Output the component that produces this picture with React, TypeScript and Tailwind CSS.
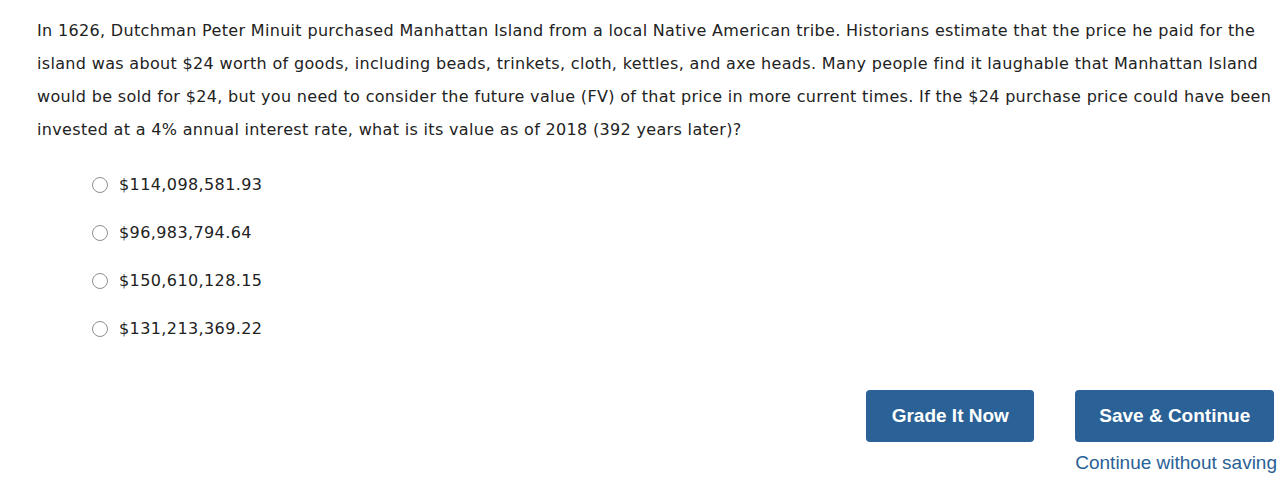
import React from "react";

const options = [
  "$114,098,581.93",
  "$96,983,794.64",
  "$150,610,128.15",
  "$131,213,369.22",
];

const verdana = { fontFamily: "'DejaVu Sans', sans-serif" };

export default function App() {
  return (
    <div className="w-[1285px] h-[481px] bg-white overflow-hidden text-black">
      <div className="pl-[37px] pr-[4px] pt-[14px]">
        <p className="text-[16px] leading-[33px] tracking-[0.33px] text-[#222]" style={verdana}>
          In 1626, Dutchman Peter Minuit purchased Manhattan Island from a local Native American tribe. Historians estimate that the price he paid for the island was about $24 worth of goods, including beads, trinkets, cloth, kettles, and axe heads. Many people find it laughable that Manhattan Island would be sold for $24, but you need to consider the future value (FV) of that price in more current times. If the $24 purchase price could have been invested at a 4% annual interest rate, what is its value as of 2018 (392 years later)?
        </p>
        <div className="mt-[26px] pl-[55px] flex flex-col gap-[22px]">
          {options.map((o) => (
            <label key={o} className="flex items-center gap-[11px] h-[26px]" style={verdana}>
              <span className="w-[16px] h-[16px] rounded-full border border-[#8f8f8f] bg-white inline-block" />
              <span className="text-[16px] tracking-[0.4px] text-[#222]">{o}</span>
            </label>
          ))}
        </div>
      </div>
      <div className="flex justify-end pr-[8px] mt-[48px] gap-[41px]" style={{ fontFamily: "'Liberation Sans', Arial, sans-serif" }}>
        <button className="w-[168px] h-[52px] rounded-[4px] bg-[#2a6196] text-white font-bold text-[19px]">Grade It Now</button>
        <div className="flex flex-col items-start">
          <button className="w-[199px] h-[52px] rounded-[4px] bg-[#2a6196] text-white font-bold text-[19px]">Save &amp; Continue</button>
          <span className="mt-[10px] text-[19px] leading-[22px] text-[#2a6196] whitespace-nowrap">Continue without saving</span>
        </div>
      </div>
    </div>
  );
}
